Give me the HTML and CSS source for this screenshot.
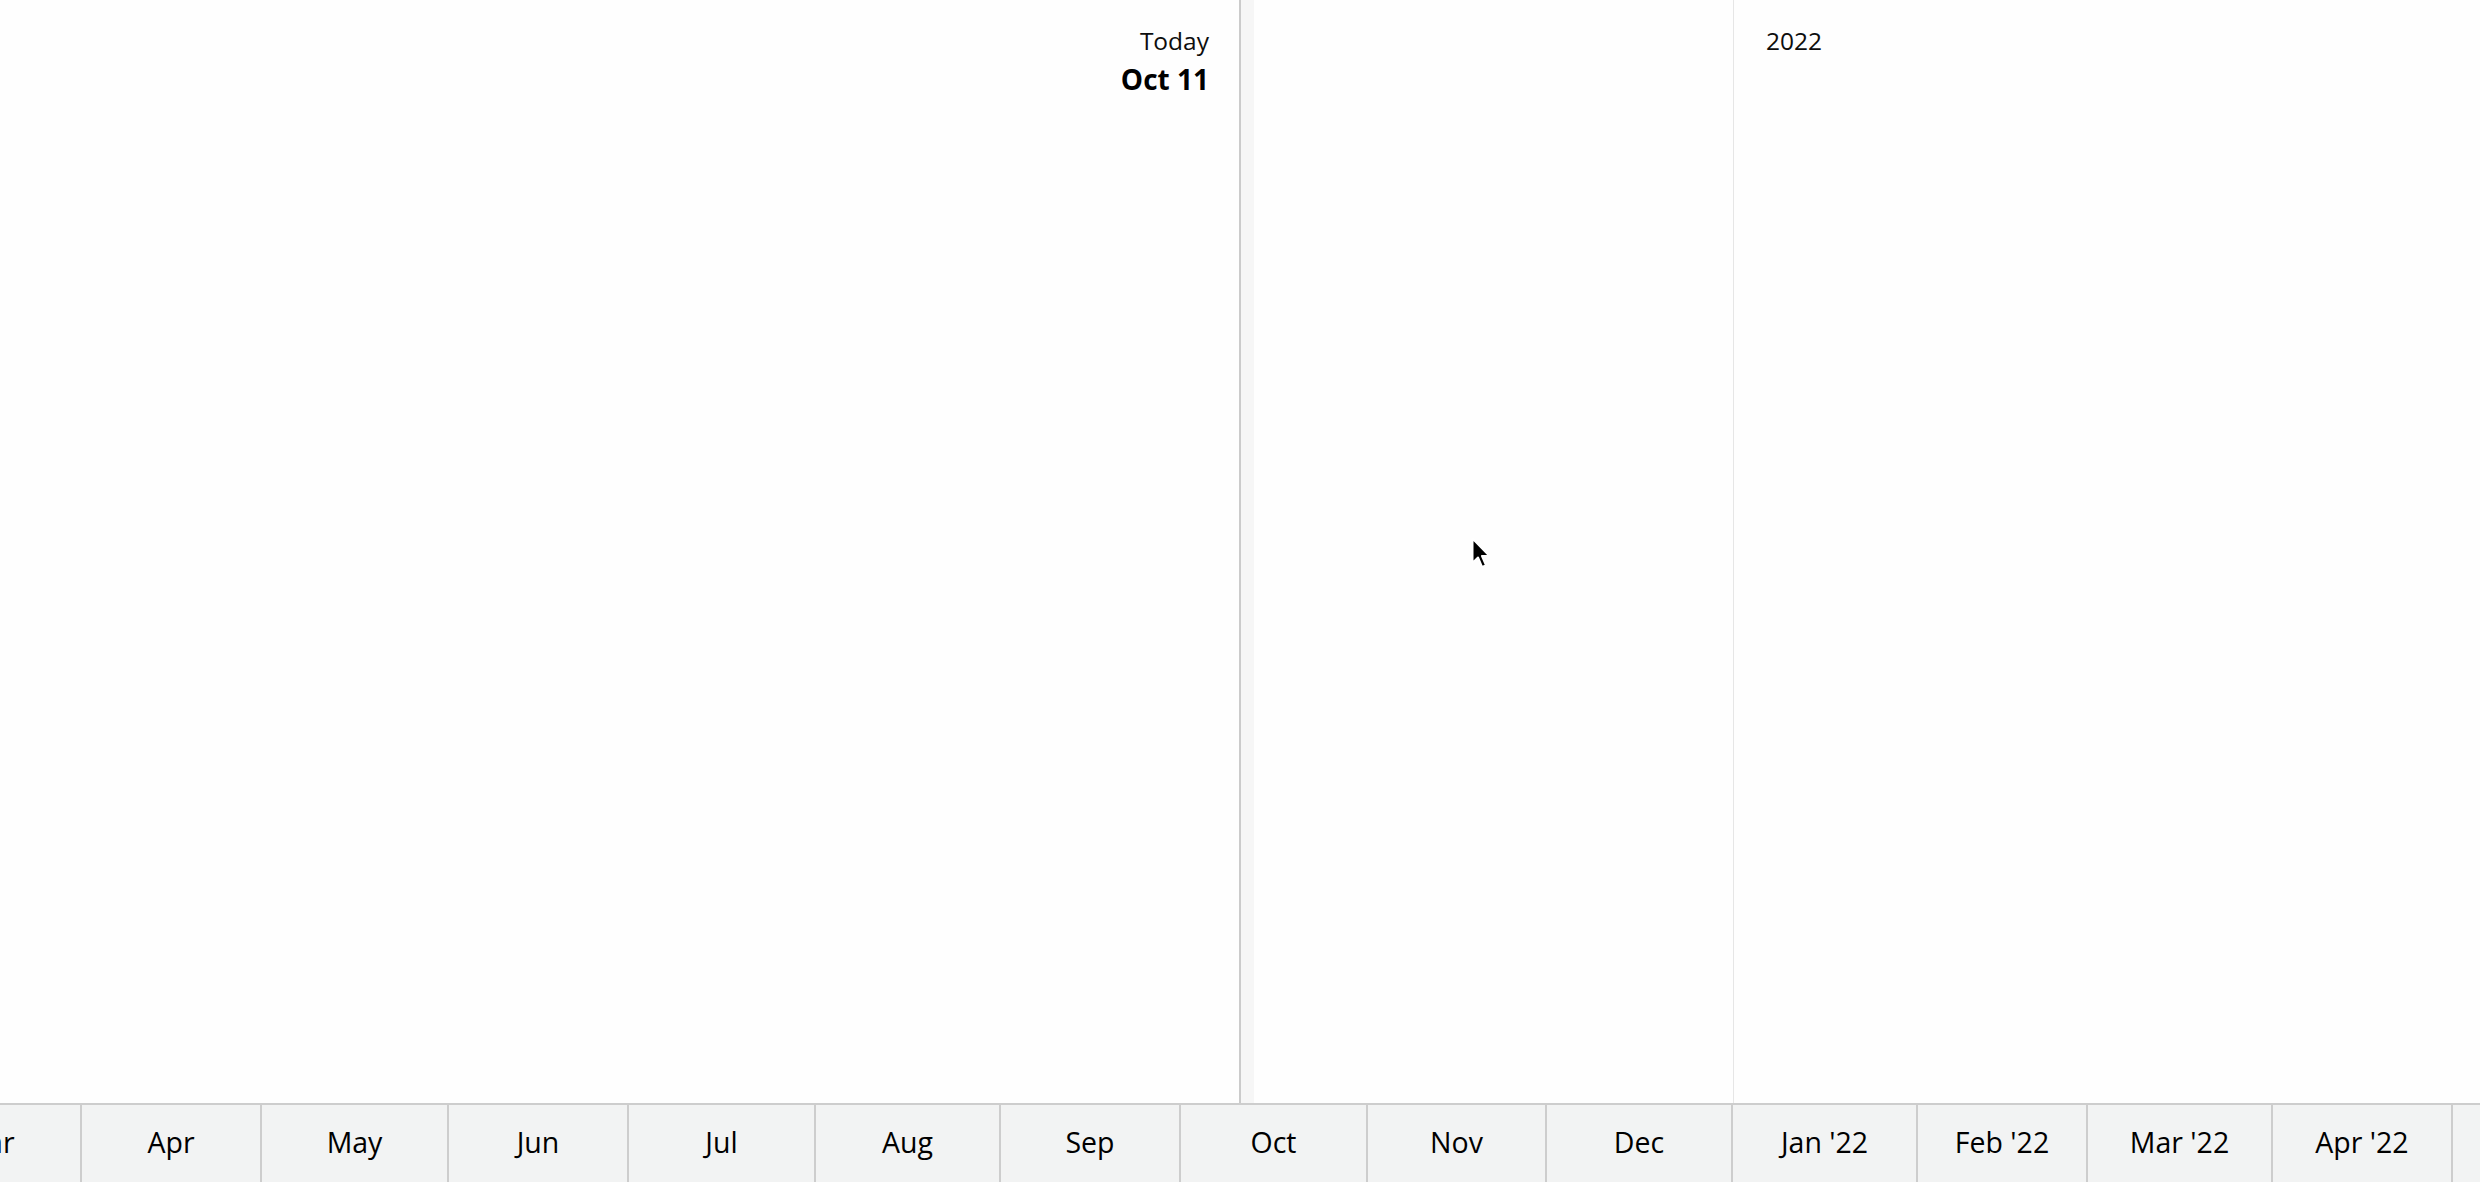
FILE: index.html
```html
<!DOCTYPE html>
<html>
<head>
<meta charset="utf-8">
<link rel="stylesheet" href="styles.css">
</head>
<body>
<div class="timeline">
  <div class="canvas">
    <div class="marker today" style="left:1239px">
      <div class="marker-label label-left">
        <div class="label-small">Today</div>
        <div class="label-big">Oct 11</div>
      </div>
    </div>
    <div class="marker year" style="left:1733px">
      <div class="marker-label label-right">
        <div class="label-small">2022</div>
      </div>
    </div>
    <svg class="cursor" width="24" height="36" viewBox="0 0 24 36">
      <path d="M1.5 1.5 L1.5 26 L7 20.5 L11 30 L15 28.3 L11 19 L18.5 19 Z" fill="#000" stroke="#fff" stroke-width="2" stroke-linejoin="round"/>
    </svg>
  </div>
  <div class="months">
    <div class="month" style="width:186px">Mar</div>
    <div class="month" style="width:180px">Apr</div>
    <div class="month" style="width:187px">May</div>
    <div class="month" style="width:180px">Jun</div>
    <div class="month" style="width:187px">Jul</div>
    <div class="month" style="width:185px">Aug</div>
    <div class="month" style="width:180px">Sep</div>
    <div class="month" style="width:187px">Oct</div>
    <div class="month" style="width:179px">Nov</div>
    <div class="month" style="width:186px">Dec</div>
    <div class="month" style="width:185px">Jan '22</div>
    <div class="month" style="width:170px">Feb '22</div>
    <div class="month" style="width:185px">Mar '22</div>
    <div class="month" style="width:180px">Apr '22</div>
    <div class="month" style="width:186px">May '22</div>
  </div>
</div>
</body>
</html>
```
FILE: styles.css
```css
html, body {
  margin: 0;
  padding: 0;
  background: #ffffff;
  overflow: hidden;
}
body {
  font-family: "Open Sans", "Noto Sans", sans-serif;
  color: #111;
}
.timeline {
  width: 2480px;
  height: 1182px;
  display: flex;
  flex-direction: column;
  overflow: hidden;
}
.canvas {
  position: relative;
  flex: 1;
  background: #fefefe;
}
.marker {
  position: absolute;
  top: 0;
  bottom: 0;
}
.marker.today {
  width: 15px;
  border-left: 2px solid #cbcbcb;
  background: #f6f6f6;
  box-sizing: border-box;
}
.marker.year {
  width: 0;
  border-left: 1px solid #e6e6e6;
}
.marker-label {
  position: absolute;
  top: 24px;
  white-space: nowrap;
}
.label-left {
  right: calc(100% + 32px);
  text-align: right;
}
.marker.today .label-left {
  right: calc(100% + 32px);
}
.label-right {
  left: 32px;
}
.label-small {
  font-size: 24.5px;
  line-height: 33px;
  color: #0d0d0d;
}
.label-big {
  font-size: 28px;
  font-weight: 700;
  line-height: 38px;
  margin-top: 3px;
  color: #000;
}
.cursor {
  position: absolute;
  left: 1471px;
  top: 537px;
}
.months {
  height: 79px;
  flex: none;
  display: flex;
  margin-left: -104px;
  border-top: 2px solid #cdcdcd;
  background: #f2f3f3;
  box-sizing: border-box;
}
.month {
  flex: none;
  box-sizing: border-box;
  border-right: 2px solid #cdcdcd;
  display: flex;
  align-items: center;
  justify-content: center;
  font-size: 28.5px;
  color: #000;
  padding-bottom: 4px;
}
```
